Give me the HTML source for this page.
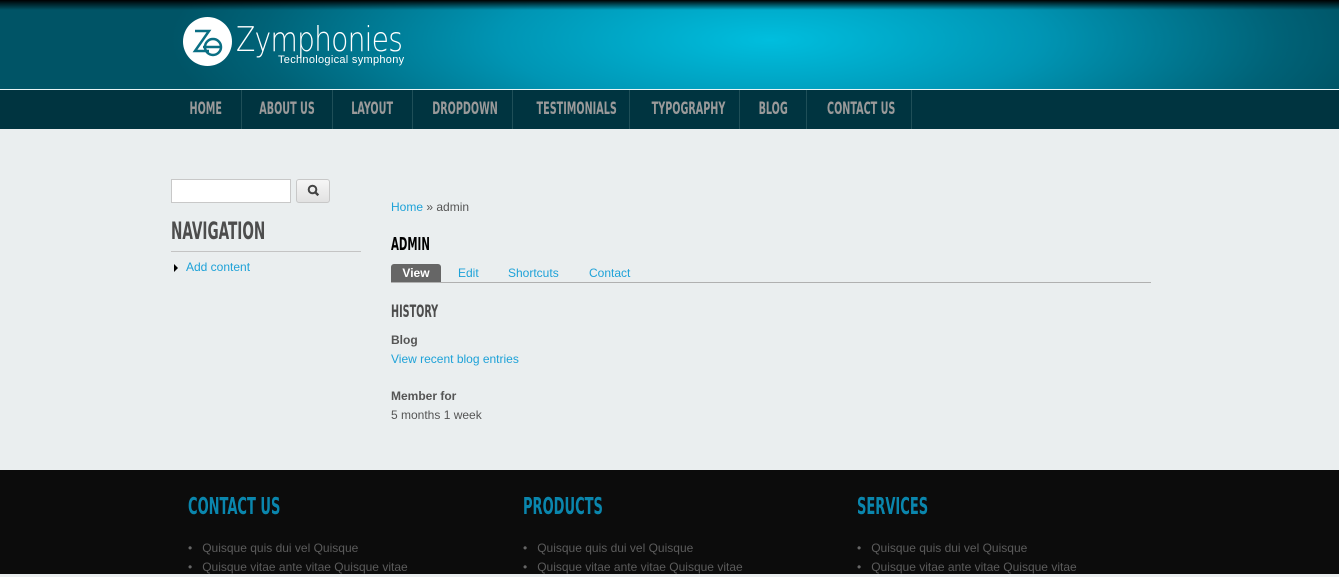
<!DOCTYPE html>
<html><head><meta charset="utf-8"><style>
*{margin:0;padding:0;box-sizing:border-box}
body{width:1339px;height:574px;overflow:hidden;background:#eaeeef;font-family:"Liberation Sans",sans-serif;font-size:12px;color:#555}
.cd{font-family:"DejaVu Sans Condensed","DejaVu Sans",sans-serif;font-weight:bold;text-transform:uppercase}
.sx{display:inline-block;transform:scaleX(.63);transform-origin:0 0;white-space:nowrap}
#hd{position:absolute;top:0;left:0;width:1339px;height:89px;background:radial-gradient(ellipse 600px 160px at 770px 40px,#00bede 0%,#0095b4 45%,#006277 85%,#005466 100%)}
#hd:before{content:"";position:absolute;top:0;left:0;right:0;height:10px;background:linear-gradient(#000,rgba(0,0,0,0))}
#line{position:absolute;top:89px;left:0;width:1339px;height:1px;background:#e8f4f6}
#nav{position:absolute;top:90px;left:0;width:1339px;height:39px;background:#003440}
#nav a{position:absolute;top:0;height:39px;line-height:38px;color:#9a9a9a;font-size:17px;text-align:center;border-right:1px solid #1f4f58}
#nav a span{display:inline-block;transform:scaleX(.63);white-space:nowrap}
a{text-decoration:none;color:#1ea2d8}
.logo{position:absolute;left:183px;top:17px;width:49px;height:49px;border-radius:50%;background:#fff}
.abs{position:absolute}
#ft{position:absolute;top:470px;left:0;width:1339px;height:104px;background:#0c0c0c}
#ft h2{position:absolute;top:24px;color:#0a86ad;font-size:23px}
#ft ul{position:absolute;top:69px;list-style:none;color:#5c5c5c;font-size:12px;line-height:19px}
#ft li:before{content:"•";margin:0 10px 0 0;color:#666}
</style></head><body>
<div id="hd">
<div class="logo"><svg width="49" height="49" viewBox="0 0 49 49"><path d="M12 14h14L12 34h14" stroke="#0a6f84" stroke-width="2.5" fill="none"/><circle cx="30" cy="30" r="8" stroke="#0a6f84" stroke-width="2.5" fill="none"/><path d="M20 30h18" stroke="#0a6f84" stroke-width="2.5"/></svg></div>
<div class="abs" style="left:236px;top:20px;color:#fff;font-size:34px;font-family:'DejaVu Sans',sans-serif;font-weight:200;letter-spacing:-1px;transform:scaleX(.83);transform-origin:0 0">Zymphonies</div>
<div class="abs" style="left:278px;top:54px;color:#fff;font-size:11px;letter-spacing:.3px">Technological symphony</div>
</div>
<div id="line"></div>
<div id="nav" class="cd">
<a style="left:171px;width:71px"><span>Home</span></a>
<a style="left:242px;width:91px"><span>About us</span></a>
<a style="left:333px;width:80px"><span>Layout</span></a>
<a style="left:413px;width:100px"><span>Dropdown</span></a>
<a style="left:513px;width:117px"><span>Testimonials</span></a>
<a style="left:630px;width:110px"><span>Typography</span></a>
<a style="left:740px;width:67px"><span>Blog</span></a>
<a style="left:807px;width:105px"><span>Contact us</span></a>
</div>
<div class="abs" style="left:171px;top:179px;width:120px;height:24px;background:#fff;border:1px solid #c8c8c8"></div>
<div class="abs" style="left:296px;top:179px;width:34px;height:24px;background:linear-gradient(#f6f6f6,#e2e2e2);border:1px solid #c8c8c8;border-radius:3px"><svg width="34" height="22" viewBox="0 0 34 22"><circle cx="15.5" cy="9.5" r="3.8" stroke="#444" stroke-width="2" fill="none"/><path d="M18.3 12.3l3 3" stroke="#444" stroke-width="2.4"/></svg></div>
<div class="abs cd" style="left:171px;top:217px;font-size:24px;color:#4d4d4d"><span class="sx">Navigation</span></div>
<div class="abs" style="left:171px;top:251px;width:190px;height:1px;background:#c4c4c4"></div>
<div class="abs" style="left:174px;top:264px;width:0;height:0;border-left:4px solid #000;border-top:4px solid transparent;border-bottom:4px solid transparent"></div>
<div class="abs" style="left:186px;top:260px"><a>Add content</a></div>
<div class="abs" style="left:391px;top:200px"><a>Home</a> » admin</div>
<div class="abs cd" style="left:391px;top:234px;font-size:18px;color:#000"><span class="sx">Admin</span></div>
<div class="abs" style="left:391px;top:264px;width:50px;height:18px;background:#666;color:#fff;font-weight:bold;text-align:center;line-height:18px;border-radius:3px 3px 0 0">View</div>
<div class="abs" style="left:458px;top:266px"><a>Edit</a></div>
<div class="abs" style="left:508px;top:266px"><a>Shortcuts</a></div>
<div class="abs" style="left:589px;top:266px"><a>Contact</a></div>
<div class="abs" style="left:391px;top:282px;width:760px;height:1px;background:#b0b0b0"></div>
<div class="abs cd" style="left:391px;top:302px;font-size:17px;color:#4d4d4d"><span class="sx">History</span></div>
<div class="abs" style="left:391px;top:333px;font-weight:bold">Blog</div>
<div class="abs" style="left:391px;top:352px"><a>View recent blog entries</a></div>
<div class="abs" style="left:391px;top:389px;font-weight:bold">Member for</div>
<div class="abs" style="left:391px;top:408px">5 months 1 week</div>
<div id="ft">
<h2 class="cd" style="left:188px"><span class="sx">Contact us</span></h2>
<h2 class="cd" style="left:523px"><span class="sx">Products</span></h2>
<h2 class="cd" style="left:857px"><span class="sx">Services</span></h2>
<ul style="left:188px"><li>Quisque quis dui vel Quisque</li><li>Quisque vitae ante vitae Quisque vitae</li></ul>
<ul style="left:523px"><li>Quisque quis dui vel Quisque</li><li>Quisque vitae ante vitae Quisque vitae</li></ul>
<ul style="left:857px"><li>Quisque quis dui vel Quisque</li><li>Quisque vitae ante vitae Quisque vitae</li></ul>
</div>
</body></html>
